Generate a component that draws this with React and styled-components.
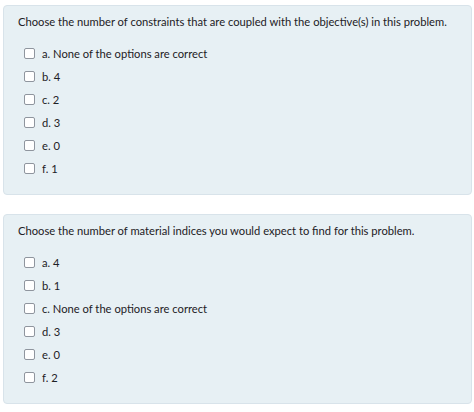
import React from 'react';
import styled, { createGlobalStyle } from 'styled-components';

const GlobalStyle = createGlobalStyle`
    html, body {
        margin: 0;
        padding: 0;
        background: #ffffff;
    }
    body {
        font-family: Lato, "Noto Sans", sans-serif;
        color: #1d2125;
    }
`

const Page = styled.div`
    padding: 5px 2px 8px 3px;
    display: flex;
    flex-direction: column;
    gap: 19px;
`

const Card = styled.div`
    background: #e7f0f4;
    border: 1px solid #d8e3ea;
    border-radius: 4px;
    padding: 8px 14px 18px 14px;
`

const Question = styled.p`
    margin: 0 0 15px 0;
    font-size: 11.2px;
    line-height: 16px;
`

const Options = styled.div`
    display: flex;
    flex-direction: column;
    gap: 7px;
    padding-left: 6px;
`

const Option = styled.label`
    display: flex;
    align-items: center;
    gap: 7px;
    height: 16px;
    font-size: 11.2px;
`

const Box = styled.span`
    width: 9px;
    height: 9px;
    border: 1px solid #8f959e;
    border-radius: 2px;
    background: #ffffff;
    flex-shrink: 0;
`

const questions = [
    {
        text: 'Choose the number of constraints that are coupled with the objective(s) in this problem.',
        options: ['a. None of the options are correct', 'b. 4', 'c. 2', 'd. 3', 'e. 0', 'f. 1'],
    },
    {
        text: 'Choose the number of material indices you would expect to find for this problem.',
        options: ['a. 4', 'b. 1', 'c. None of the options are correct', 'd. 3', 'e. 0', 'f. 2'],
    },
];

const App = () => {
    return (
        <>
            <GlobalStyle />
            <Page>
                {questions.map((q, i) => (
                    <Card key={i}>
                        <Question>{q.text}</Question>
                        <Options>
                            {q.options.map(o => (
                                <Option key={o}>
                                    <Box />
                                    <span>{o}</span>
                                </Option>
                            ))}
                        </Options>
                    </Card>
                ))}
            </Page>
        </>
    );
};

export default App;
